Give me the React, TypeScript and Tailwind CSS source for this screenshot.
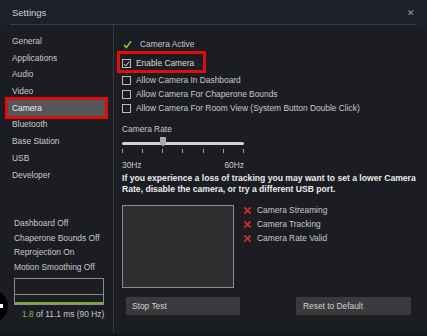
import React from 'react';

const navItems = ['General', 'Applications', 'Audio', 'Video', 'Camera', 'Bluetooth', 'Base Station', 'USB', 'Developer'];

const options = [
  { label: 'Allow Camera In Dashboard', checked: false },
  { label: 'Allow Camera For Chaperone Bounds', checked: false },
  { label: 'Allow Camera For Room View (System Button Double Click)', checked: false },
];

const checks = ['Camera Streaming', 'Camera Tracking', 'Camera Rate Valid'];

const stats = ['Dashboard Off', 'Chaperone Bounds Off', 'Reprojection On', 'Motion Smoothing Off'];

function Checkbox({ checked }: { checked?: boolean }) {
  return (
    <span className="flex h-[9px] w-[9px] shrink-0 items-center justify-center border border-[#bdbdbd]">
      {checked && (
        <svg viewBox="0 0 10 10" className="h-[8px] w-[8px]">
          <path d="M1.5 5.2 L4 7.8 L8.6 1.8" fill="none" stroke="#e6e6e6" strokeWidth="1.4" />
        </svg>
      )}
    </span>
  );
}

function RedX() {
  return (
    <svg viewBox="0 0 10 10" className="h-[9px] w-[9px] shrink-0">
      <path d="M1.5 1.5 L8.5 8.5 M8.5 1.5 L1.5 8.5" stroke="#d42a2a" strokeWidth="2" />
    </svg>
  );
}

export default function App() {
  return (
    <div
      className="relative h-[336px] w-[427px] overflow-hidden bg-[#1b1d22] text-[8.4px] text-[#c9c9c9]"
      style={{ fontFamily: '"Liberation Sans", Arial, sans-serif' }}
    >
      {/* title bar */}
      <div className="bg-[#1c2029] px-[10px]">
        <div className="flex h-[24px] items-center justify-between pl-[2px] pr-[2px] pt-[2px]">
          <span className="text-[9.5px] text-[#cfd2d6]">Settings</span>
          <span className="text-[9px] leading-none text-[#9aa0a8]">✕</span>
        </div>
        <div className="h-[1px] bg-[#383d47]" />
      </div>

      <div className="flex h-[308px]">
        {/* sidebar */}
        <div className="flex w-[114px] shrink-0 flex-col border-r border-[#34373d] pt-[8px] pb-[13px]">
          {navItems.map((item) =>
            item === 'Camera' ? (
              <div key={item} className="mx-[8px] flex h-[16.7px] items-center bg-[#555558] pl-[4px] text-[#f0f0f0] outline-[3px] outline-solid outline-[#e00d0d]">
                {item}
              </div>
            ) : (
              <div key={item} className="flex h-[16.7px] items-center pl-[12px]">
                {item}
              </div>
            )
          )}

          <div className="mt-auto flex flex-col pl-[14px] pr-[9px]">
            {stats.map((s) => (
              <div key={s} className="flex h-[14.4px] items-center whitespace-nowrap">
                {s}
              </div>
            ))}
            <div className="mt-[4px] flex h-[27px] flex-col border border-[#8a8a8a]">
              <div className="h-[16px] border-b border-[#8a8a8a]" />
              <div className="mt-auto h-[2px] bg-[#7fa832]" />
            </div>
            <div className="mt-[3px] flex h-[12px] items-center whitespace-nowrap pl-[8px]">
              <span className="text-[#86b83a]">1.8</span>&nbsp;of 11.1 ms (90 Hz)
            </div>
          </div>
        </div>

        {/* content */}
        <div className="flex flex-1 flex-col pl-[8px] pt-[13px]">
          <div className="flex h-[12px] items-center gap-[8px] pl-[1px]">
            <svg viewBox="0 0 10 10" className="h-[9px] w-[9px]">
              <path d="M1 5.4 L3.8 8.4 L9 1.5" fill="none" stroke="#7cc242" strokeWidth="1.8" />
            </svg>
            <span>Camera Active</span>
          </div>

          <div className="-ml-[5px] mt-[1px] flex h-[22px] w-[89px] items-center gap-[5px] pl-[5px] pt-[3px] outline-[3px] -outline-offset-[3px] outline-solid outline-[#e00d0d]">
            <Checkbox checked />
            <span className="text-[#dcdcdc]">Enable Camera</span>
          </div>

          <div className="flex flex-col">
            {options.map((o) => (
              <div key={o.label} className="flex h-[14px] items-center gap-[5px]">
                <Checkbox checked={o.checked} />
                <span>{o.label}</span>
              </div>
            ))}
          </div>

          <div className="mt-[8px] flex h-[12px] items-center">Camera Rate</div>

          {/* slider */}
          <div className="relative mt-[5.5px] h-[14px] w-[122px]">
            <div className="absolute left-0 right-0 top-[1px] h-[3px] rounded-full bg-[#d2d2d2]" />
            <div
              className="absolute left-[38px] top-[-4px] h-[10px] w-[6px] bg-[#a9a9a9]"
              style={{ clipPath: 'polygon(0 0,100% 0,100% 70%,50% 100%,0 70%)' }}
            />
            <div className="absolute left-0 right-0 top-[8px] flex justify-between">
              {Array.from({ length: 7 }).map((_, i) => (
                <span key={i} className="h-[4px] w-px bg-[#9a9a9a]" />
              ))}
            </div>
          </div>
          <div className="mt-[4.5px] flex h-[12px] w-[122px] items-center justify-between">
            <span>30Hz</span>
            <span>60Hz</span>
          </div>

          <div className="mt-[1.5px] whitespace-nowrap text-[8.6px] font-bold leading-[11px] text-[#ececec]">
            If you experience a loss of tracking you may want to set a lower Camera
            <br />
            Rate, disable the camera, or try a different USB port.
          </div>

          <div className="mt-[10.5px] flex gap-[9px]">
            <div className="h-[83px] w-[112px] border border-[#8c8c8c] bg-[#2e2e30]" />
            <div className="-mt-[2px] flex flex-col">
              {checks.map((c) => (
                <div key={c} className="flex h-[14px] items-center gap-[5px]">
                  <RedX />
                  <span>{c}</span>
                </div>
              ))}
            </div>
          </div>

          <div className="mt-[9px] flex justify-between pl-[4px] pr-[16px]">
            <div className="flex h-[18px] w-[114px] items-center bg-[#3a3a3c] pl-[6px] text-[#d0d0d0]">Stop Test</div>
            <div className="flex h-[18px] w-[115px] items-center bg-[#3a3a3c] pl-[7px] text-[#d0d0d0]">Reset to Default</div>
          </div>
        </div>
      </div>

      <div className="h-[3px] bg-[#0e1920]" />

      {/* partial round overlay at left edge */}
      <div className="absolute left-[-24px] top-[290px] flex h-[32px] w-[32px] items-center justify-end rounded-full bg-black pr-[5px]">
        <span className="h-[4px] w-[5px] bg-white" />
      </div>
    </div>
  );
}
